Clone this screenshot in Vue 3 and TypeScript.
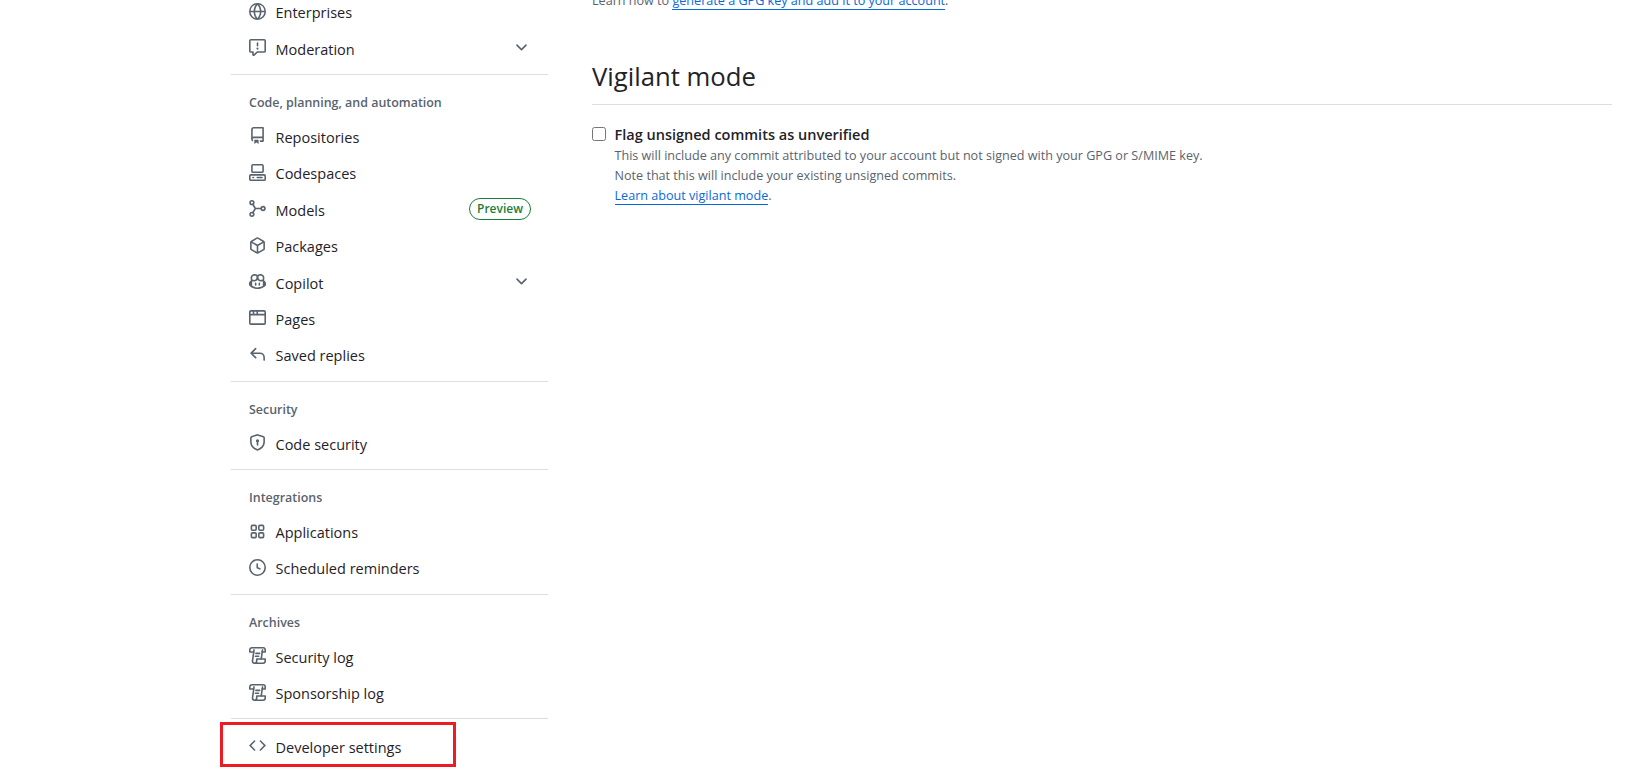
<script setup lang="ts">
type Row = { label: string; icon: string; chevron?: boolean; badge?: string };
type Group = { heading?: string; rows: Row[] };

const icons: Record<string, string> = {
  globe:
    "M8 0a8 8 0 1 1 0 16A8 8 0 0 1 8 0ZM5.78 8.75a9.64 9.64 0 0 0 1.363 4.177c.255.426.542.832.857 1.215.245-.296.551-.705.857-1.215A9.64 9.64 0 0 0 10.22 8.75Zm4.44-1.5a9.64 9.64 0 0 0-1.363-4.177c-.307-.51-.612-.919-.857-1.215a9.927 9.927 0 0 0-.857 1.215A9.64 9.64 0 0 0 5.78 7.25Zm-5.944 1.5H1.543a6.507 6.507 0 0 0 4.666 5.5c-.123-.181-.24-.365-.352-.552-.715-1.192-1.437-2.874-1.581-4.948Zm-2.733-1.5h2.733c.144-2.074.866-3.756 1.58-4.948.12-.197.237-.381.353-.552a6.507 6.507 0 0 0-4.666 5.5Zm10.181 1.5c-.144 2.074-.866 3.756-1.58 4.948-.12.197-.237.381-.353.552a6.507 6.507 0 0 0 4.666-5.5Zm2.733-1.5a6.507 6.507 0 0 0-4.666-5.5c.123.181.24.365.353.552.714 1.192 1.436 2.874 1.58 4.948Z",
  report:
    "M0 1.75C0 .784.784 0 1.75 0h12.5C15.216 0 16 .784 16 1.75v9.5A1.75 1.75 0 0 1 14.25 13H8.06l-2.573 2.573A1.458 1.458 0 0 1 3 14.543V13H1.75A1.75 1.75 0 0 1 0 11.25Zm1.75-.25a.25.25 0 0 0-.25.25v9.5c0 .138.112.25.25.25h2a.75.75 0 0 1 .75.75v2.19l2.72-2.72a.749.749 0 0 1 .53-.22h6.5a.25.25 0 0 0 .25-.25v-9.5a.25.25 0 0 0-.25-.25Zm7 2.25v2.5a.75.75 0 0 1-1.5 0v-2.5a.75.75 0 0 1 1.5 0ZM9 9a1 1 0 1 1-2 0 1 1 0 0 1 2 0Z",
  repo:
    "M2 2.5A2.5 2.5 0 0 1 4.5 0h8.75a.75.75 0 0 1 .75.75v12.5a.75.75 0 0 1-.75.75h-2.5a.75.75 0 0 1 0-1.5h1.75v-2h-8a1 1 0 0 0-.714 1.7.75.75 0 1 1-1.072 1.05A2.495 2.495 0 0 1 2 11.5Zm10.5-1h-8a1 1 0 0 0-1 1v6.708A2.486 2.486 0 0 1 4.5 9h8ZM5 12.25a.25.25 0 0 1 .25-.25h3.5a.25.25 0 0 1 .25.25v3.25a.25.25 0 0 1-.4.2l-1.45-1.087a.249.249 0 0 0-.3 0L5.4 15.7a.25.25 0 0 1-.4-.2Z",
  codespaces:
    "M0 11.25c0-.966.784-1.75 1.75-1.75h12.5c.966 0 1.75.784 1.75 1.75v3A1.75 1.75 0 0 1 14.25 16H1.75A1.75 1.75 0 0 1 0 14.25Zm2-9.5C2 .784 2.784 0 3.75 0h8.5C13.216 0 14 .784 14 1.75v5a1.75 1.75 0 0 1-1.75 1.75h-8.5A1.75 1.75 0 0 1 2 6.75Zm1.75-.25a.25.25 0 0 0-.25.25v5c0 .138.112.25.25.25h8.5a.25.25 0 0 0 .25-.25v-5a.25.25 0 0 0-.25-.25Zm-2 9.5a.25.25 0 0 0-.25.25v3c0 .138.112.25.25.25h12.5a.25.25 0 0 0 .25-.25v-3a.25.25 0 0 0-.25-.25ZM7 12.75a.75.75 0 0 1 .75-.75h4.5a.75.75 0 0 1 0 1.5h-4.5a.75.75 0 0 1-.75-.75Zm-4 0a.75.75 0 0 1 .75-.75h.5a.75.75 0 0 1 0 1.5h-.5a.75.75 0 0 1-.75-.75Z",
  package:
    "m8.878.392 5.25 3.045c.54.314.872.89.872 1.514v6.098a1.75 1.75 0 0 1-.872 1.514l-5.25 3.045a1.75 1.75 0 0 1-1.756 0l-5.25-3.045A1.75 1.75 0 0 1 1 11.049V4.951c0-.624.332-1.201.872-1.514L7.122.392a1.75 1.75 0 0 1 1.756 0ZM7.875 1.69l-4.63 2.685L8 7.133l4.755-2.758-4.63-2.685a.248.248 0 0 0-.25 0ZM2.5 5.677v5.372c0 .09.047.171.125.216l4.625 2.683V8.432Zm6.25 8.271 4.625-2.683a.25.25 0 0 0 .125-.216V5.677L8.75 8.432Z",
  copilot:
    "M7.998 15.035c-4.562 0-7.873-2.914-7.998-3.749V9.338c.085-.628.677-1.686 1.588-2.065.013-.07.024-.143.036-.218.029-.183.06-.384.126-.612-.201-.508-.254-1.084-.254-1.656 0-.87.128-1.769.693-2.484.579-.733 1.494-1.124 2.724-1.261 1.206-.134 2.262.034 2.944.765.05.053.096.108.139.165.044-.057.094-.112.143-.165.682-.731 1.738-.899 2.944-.765 1.23.137 2.145.528 2.724 1.261.566.715.693 1.614.693 2.484 0 .572-.053 1.148-.254 1.656.066.228.098.429.126.612.012.076.024.148.037.218.924.385 1.522 1.471 1.591 2.095v1.872c0 .766-3.351 3.795-8.002 3.795Zm0-1.485c2.28 0 4.584-1.11 5.002-1.433V7.862l-.023-.116c-.49.21-1.075.291-1.727.291-1.146 0-2.059-.327-2.71-.991A3.222 3.222 0 0 1 8 6.303a3.24 3.24 0 0 1-.544.743c-.65.664-1.563.991-2.71.991-.652 0-1.236-.081-1.727-.291l-.023.116v4.255c.419.323 2.722 1.433 5.002 1.433ZM6.762 2.83c-.193-.206-.637-.413-1.682-.297-1.019.113-1.479.404-1.713.7-.247.312-.369.789-.369 1.554 0 .793.129 1.171.308 1.371.162.181.519.379 1.442.379.853 0 1.339-.235 1.638-.54.315-.322.527-.827.617-1.553.117-.935-.037-1.395-.241-1.614Zm4.155-.297c-1.044-.116-1.488.091-1.681.297-.204.219-.359.679-.242 1.614.091.726.303 1.231.618 1.553.299.305.784.54 1.638.54.922 0 1.28-.198 1.442-.379.179-.2.308-.578.308-1.371 0-.765-.123-1.242-.37-1.554-.233-.296-.693-.587-1.713-.7ZM6.25 9.037a.75.75 0 0 1 .75.75v1.501a.75.75 0 0 1-1.5 0V9.787a.75.75 0 0 1 .75-.75Zm4.25.75v1.501a.75.75 0 0 1-1.5 0V9.787a.75.75 0 0 1 1.5 0Z",
  browser:
    "M0 2.75C0 1.784.784 1 1.75 1h12.5c.966 0 1.75.784 1.75 1.75v10.5A1.75 1.75 0 0 1 14.25 15H1.75A1.75 1.75 0 0 1 0 13.25ZM14.5 6h-13v7.25c0 .138.112.25.25.25h12.5a.25.25 0 0 0 .25-.25Zm-6-3.5v2h6V2.75a.25.25 0 0 0-.25-.25ZM5 2.5v2h2v-2Zm-3.25 0a.25.25 0 0 0-.25.25V4.5h2v-2Z",
  reply:
    "M6.78 1.97a.75.75 0 0 1 0 1.06L3.81 6h6.44A4.75 4.75 0 0 1 15 10.75v2.5a.75.75 0 0 1-1.5 0v-2.5a3.25 3.25 0 0 0-3.25-3.25H3.81l2.97 2.97a.749.749 0 0 1-.326 1.275.749.749 0 0 1-.734-.215L1.47 7.28a.75.75 0 0 1 0-1.06l4.25-4.25a.75.75 0 0 1 1.06 0Z",
  shield:
    "m8.533.133 5.25 1.68A1.75 1.75 0 0 1 15 3.48V7c0 1.566-.32 3.182-1.303 4.682-.983 1.498-2.585 2.813-5.032 3.855a1.697 1.697 0 0 1-1.33 0c-2.447-1.042-4.049-2.357-5.032-3.855C1.32 10.182 1 8.566 1 7V3.48a1.75 1.75 0 0 1 1.217-1.667l5.25-1.68a1.748 1.748 0 0 1 1.066 0Zm-.61 1.429.001.001-5.25 1.68a.251.251 0 0 0-.174.237V7c0 1.36.275 2.666 1.057 3.859.784 1.194 2.121 2.342 4.366 3.298a.196.196 0 0 0 .154 0c2.245-.957 3.582-2.103 4.366-3.297C13.225 9.666 13.5 8.358 13.5 7V3.48a.25.25 0 0 0-.174-.238l-5.25-1.68a.25.25 0 0 0-.153 0ZM9.5 6.5c0 .536-.286 1.032-.75 1.3v2.45a.75.75 0 0 1-1.5 0V7.8A1.5 1.5 0 1 1 9.5 6.5Z",
  apps:
    "M1.5 3.25c0-.966.784-1.75 1.75-1.75h2.5c.966 0 1.75.784 1.75 1.75v2.5A1.75 1.75 0 0 1 5.75 7.5h-2.5A1.75 1.75 0 0 1 1.5 5.75Zm7 0c0-.966.784-1.75 1.75-1.75h2.5c.966 0 1.75.784 1.75 1.75v2.5a1.75 1.75 0 0 1-1.75 1.75h-2.5A1.75 1.75 0 0 1 8.5 5.75Zm-7 7c0-.966.784-1.75 1.75-1.75h2.5c.966 0 1.75.784 1.75 1.75v2.5a1.75 1.75 0 0 1-1.75 1.75h-2.5a1.75 1.75 0 0 1-1.75-1.75Zm7 0c0-.966.784-1.75 1.75-1.75h2.5c.966 0 1.75.784 1.75 1.75v2.5a1.75 1.75 0 0 1-1.75 1.75h-2.5a1.75 1.75 0 0 1-1.75-1.75ZM3.25 3a.25.25 0 0 0-.25.25v2.5c0 .138.112.25.25.25h2.5A.25.25 0 0 0 6 5.75v-2.5A.25.25 0 0 0 5.75 3Zm7 0a.25.25 0 0 0-.25.25v2.5c0 .138.112.25.25.25h2.5a.25.25 0 0 0 .25-.25v-2.5a.25.25 0 0 0-.25-.25Zm-7 7a.25.25 0 0 0-.25.25v2.5c0 .138.112.25.25.25h2.5a.25.25 0 0 0 .25-.25v-2.5a.25.25 0 0 0-.25-.25Zm7 0a.25.25 0 0 0-.25.25v2.5c0 .138.112.25.25.25h2.5a.25.25 0 0 0 .25-.25v-2.5a.25.25 0 0 0-.25-.25Z",
  clock:
    "M8 0a8 8 0 1 1 0 16A8 8 0 0 1 8 0ZM1.5 8a6.5 6.5 0 1 0 13 0 6.5 6.5 0 0 0-13 0Zm7-3.25v2.992l2.028.812a.75.75 0 0 1-.557 1.392l-2.5-1A.751.751 0 0 1 7 8.25v-3.5a.75.75 0 0 1 1.5 0Z",
  code:
    "m11.28 3.22 4.25 4.25a.75.75 0 0 1 0 1.06l-4.25 4.25a.749.749 0 0 1-1.275-.326.749.749 0 0 1 .215-.734L13.94 8l-3.72-3.72a.749.749 0 0 1 .326-1.275.749.749 0 0 1 .734.215Zm-6.56 0a.751.751 0 0 1 1.042.018.751.751 0 0 1 .018 1.042L2.06 8l3.72 3.72a.749.749 0 0 1-.326 1.275.749.749 0 0 1-.734-.215L.47 8.53a.75.75 0 0 1 0-1.06Z",
};

const groups: Group[] = [
  {
    rows: [
      { label: "Enterprises", icon: "globe" },
      { label: "Moderation", icon: "report", chevron: true },
    ],
  },
  {
    heading: "Code, planning, and automation",
    rows: [
      { label: "Repositories", icon: "repo" },
      { label: "Codespaces", icon: "codespaces" },
      { label: "Models", icon: "model", badge: "Preview" },
      { label: "Packages", icon: "package" },
      { label: "Copilot", icon: "copilot", chevron: true },
      { label: "Pages", icon: "browser" },
      { label: "Saved replies", icon: "reply" },
    ],
  },
  { heading: "Security", rows: [{ label: "Code security", icon: "shield" }] },
  {
    heading: "Integrations",
    rows: [
      { label: "Applications", icon: "apps" },
      { label: "Scheduled reminders", icon: "clock" },
    ],
  },
  {
    heading: "Archives",
    rows: [
      { label: "Security log", icon: "log" },
      { label: "Sponsorship log", icon: "log" },
    ],
  },
  { rows: [{ label: "Developer settings", icon: "code" }] },
];
</script>

<template>
  <div class="page">
    <aside class="side">
      <section v-for="(group, i) in groups" :key="i" class="side__group">
        <h3 v-if="group.heading" class="side__heading">{{ group.heading }}</h3>
        <div v-for="row in group.rows" :key="row.label" class="side__row">
          <svg class="side__icon" viewBox="0 0 16 16" aria-hidden="true">
            <g v-if="row.icon === 'model'" class="stroke">
              <circle cx="2.75" cy="2.5" r="1.75" />
              <circle cx="2.75" cy="13.5" r="1.75" />
              <circle cx="13.25" cy="8" r="1.75" />
              <path d="M3.6 4 6 8l-2.4 4M6 8h5.5" />
            </g>
            <g v-else-if="row.icon === 'log'" class="stroke">
              <path d="M.75 4.75V2.75a2 2 0 0 1 2-2h10.5a2 2 0 0 1 2 2v2h-3M.75 4.75h3.5" />
              <path d="M4.75 2.75 3.25 13.25a2 2 0 0 0 2 2h8a2 2 0 0 0 2-2v-2H7.25v2a2 2 0 0 1-2 2" />
              <path d="M12.75 2.75 11.5 11.25M6.5 6h3.5M6 8.75h3" />
            </g>
            <path v-else :d="icons[row.icon]" />
          </svg>
          <span class="side__label">{{ row.label }}</span>
          <span v-if="row.badge" class="side__badge">{{ row.badge }}</span>
          <svg v-if="row.chevron" class="side__chevron" viewBox="0 0 16 16" aria-hidden="true">
            <path d="M12.78 6.22a.749.749 0 0 1 0 1.06l-4.25 4.25a.749.749 0 0 1-1.06 0L3.22 7.28a.749.749 0 1 1 1.06-1.06L8 9.939l3.72-3.719a.749.749 0 0 1 1.06 0Z" />
          </svg>
        </div>
      </section>
    </aside>

    <main class="main">
      <p class="main__intro">
        Learn how to <a href="#">generate a GPG key and add it to your account</a>.
      </p>
      <h2 class="main__title">Vigilant mode</h2>
      <div class="flag">
        <input id="vigilant" type="checkbox" class="flag__box" />
        <div>
          <label for="vigilant" class="flag__label">Flag unsigned commits as unverified</label>
          <p class="flag__note">This will include any commit attributed to your account but not signed with your GPG or S/MIME key.</p>
          <p class="flag__note">Note that this will include your existing unsigned commits.</p>
          <p class="flag__note"><a href="#">Learn about vigilant mode</a>.</p>
        </div>
      </div>
    </main>

    <div class="callout"></div>
  </div>
</template>

<style>
html,
body {
  margin: 0;
  height: 100%;
  overflow: hidden;
  background: #fff;
}
</style>

<style scoped>
.page {
  position: relative;
  display: flex;
  height: 780px;
  overflow: hidden;
  color: #1f2328;
  font-family: "Open Sans", "Noto Sans", sans-serif;
}

.side {
  flex: none;
  width: 317px;
  margin-left: 231px;
}

.side__group {
  padding-bottom: 6.5px;
  margin-bottom: 6.5px;
  border-bottom: 1px solid #d8dee4;
}

.side__group:first-child {
  margin-top: -5.5px;
}

.side__group:last-child {
  padding-top: 3px;
  border-bottom: 0;
}

.side__heading {
  margin: 0;
  padding: 11.5px 18px 6.5px;
  color: #59636e;
  font-size: 12.45px;
  font-weight: 600;
  line-height: 20px;
}

.side__row {
  display: flex;
  align-items: center;
  height: 36.4px;
  padding: 0 18px;
}

.side__icon {
  flex: none;
  width: 17px;
  height: 17px;
  margin: -3px 9.5px 0 0;
  fill: #59636e;
}

.stroke {
  fill: none;
  stroke: #59636e;
  stroke-width: 1.5;
  stroke-linecap: round;
  stroke-linejoin: round;
}

.side__label {
  flex: 1;
  font-size: 14.5px;
}

.side__badge {
  margin: -3px -1px 0 0;
  padding: 0 7px;
  color: #1a7f37;
  font-size: 12px;
  font-weight: 600;
  line-height: 20px;
  border: 1px solid #1a7f37;
  border-radius: 11px;
}

.side__chevron {
  flex: none;
  width: 17px;
  height: 17px;
  margin-top: -6px;
  fill: #59636e;
}

.main {
  flex: 1;
  min-width: 0;
  margin-left: 44px;
  margin-right: 30px;
}

.main a {
  color: #0969da;
  text-decoration: none;
  border-bottom: 1px solid #0969da;
}

.main__intro {
  margin: -9px 0 0;
  color: #59636e;
  font-size: 12.6px;
  line-height: 20px;
}

.main__title {
  margin: 46.5px 0 0;
  padding-bottom: 8px;
  font-size: 25.7px;
  font-weight: 400;
  line-height: 38px;
  border-bottom: 1px solid #d8dee4;
}

.flag {
  display: flex;
  margin-top: 19px;
}

.flag__box {
  flex: none;
  width: 14px;
  height: 14px;
  margin: 3px 8.5px 0 0;
}

.flag__label {
  display: block;
  font-size: 14.5px;
  font-weight: 600;
  line-height: 22px;
}

.flag__note {
  margin: 0;
  color: #59636e;
  font-size: 12.6px;
  line-height: 20px;
}

.callout {
  position: absolute;
  left: 220px;
  top: 722px;
  width: 236px;
  height: 45px;
  border: 3px solid #ed1c24;
  box-sizing: border-box;
}
</style>
